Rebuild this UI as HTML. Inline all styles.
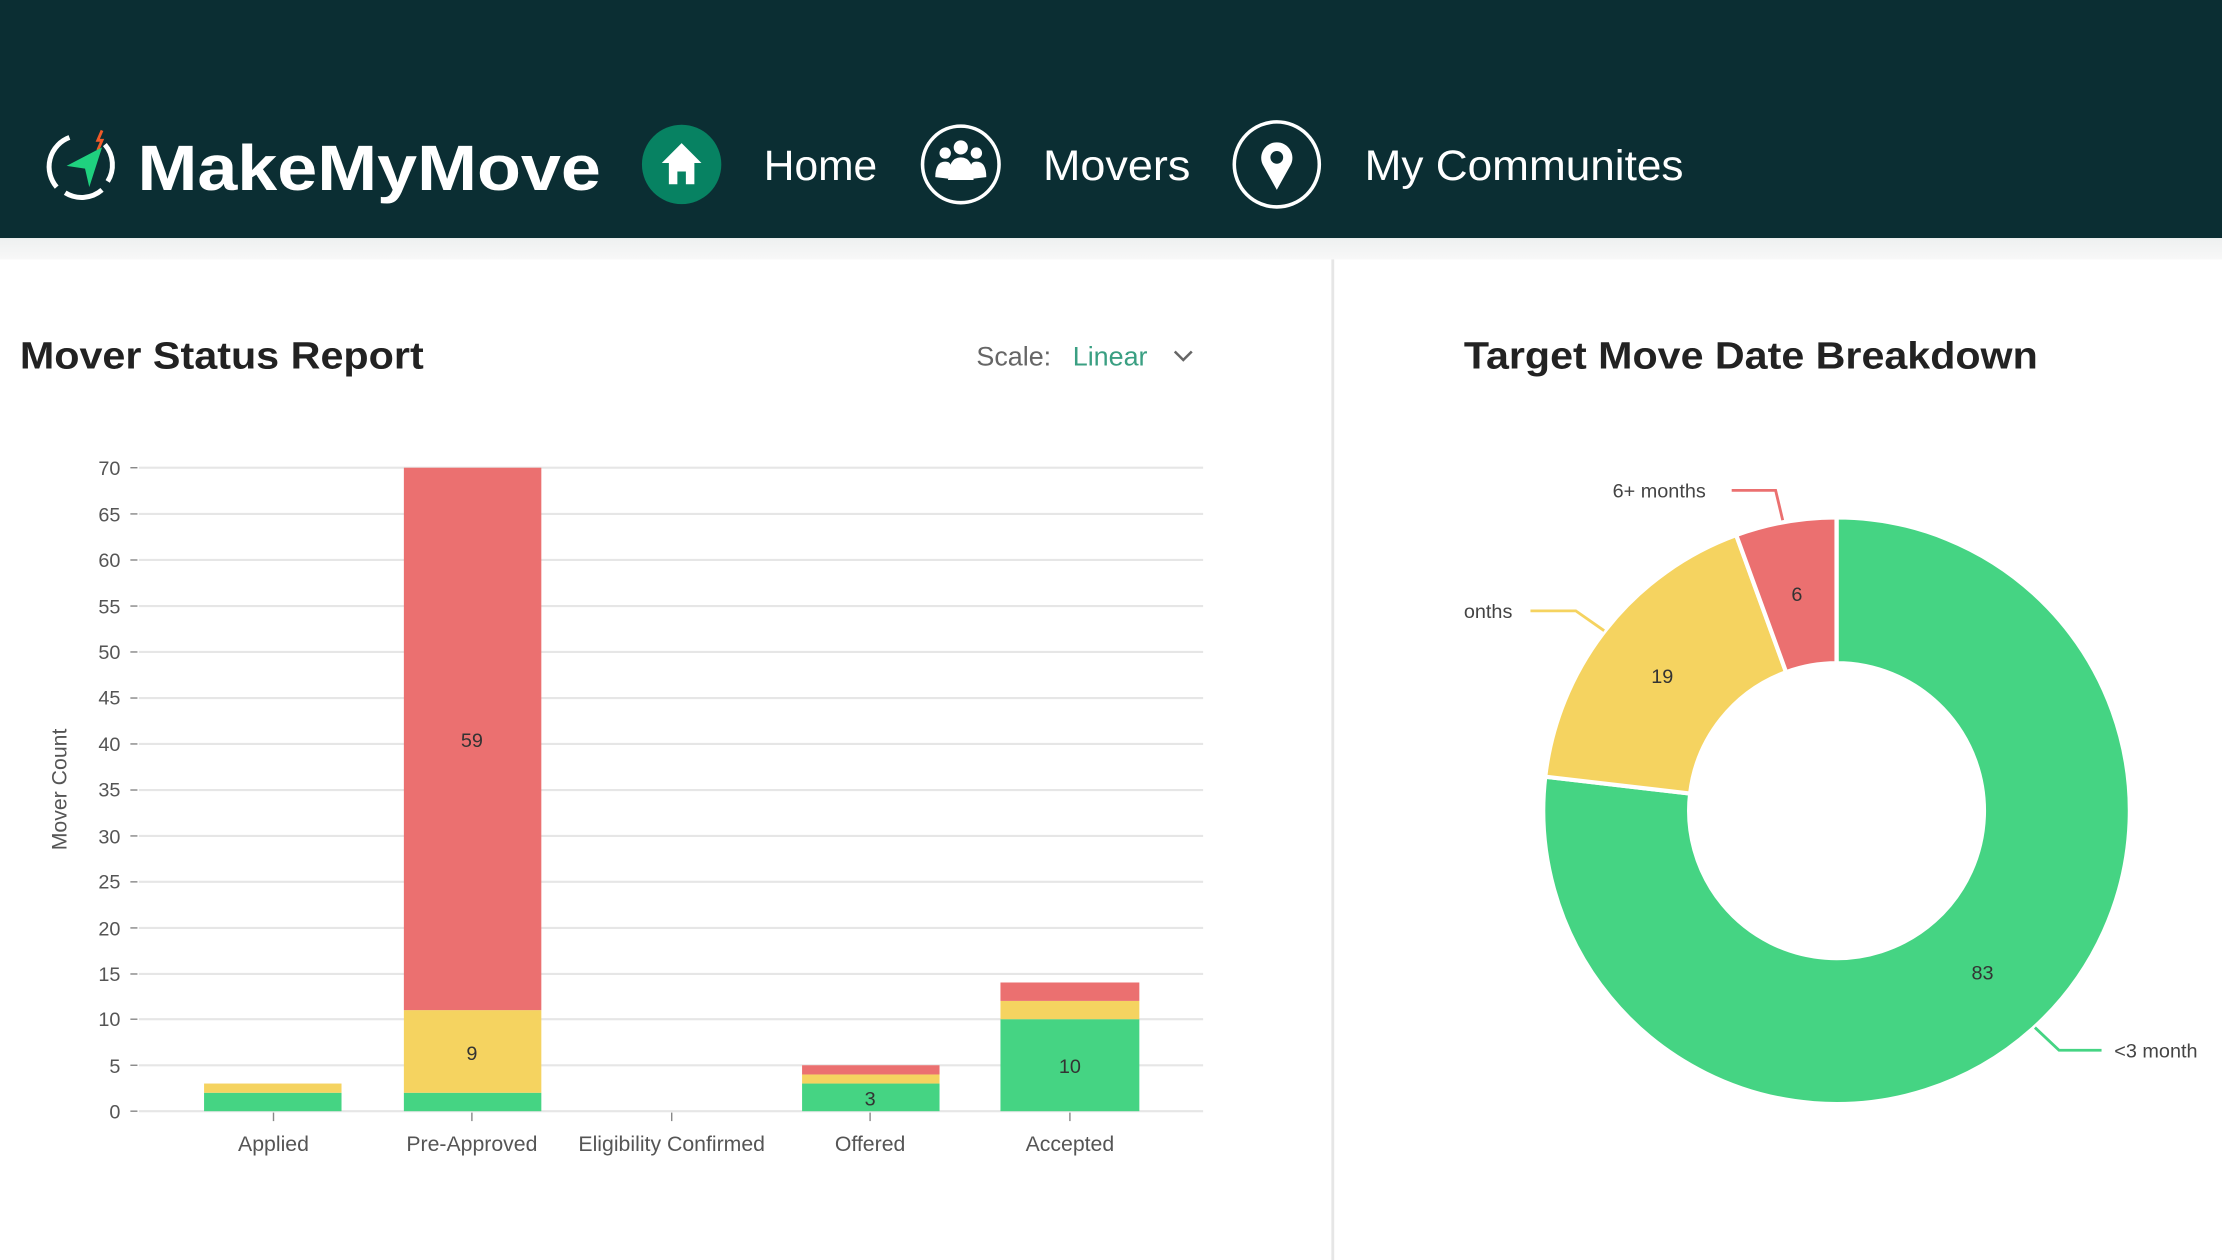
<!DOCTYPE html>
<html><head><meta charset="utf-8"><style>
html,body{margin:0;padding:0;background:#fff;width:2222px;height:1260px;overflow:hidden}
svg{display:block}
text{font-family:"Liberation Sans",sans-serif}
</style></head><body>
<svg width="2222" height="1260" viewBox="0 0 1568 889" preserveAspectRatio="none" xmlns="http://www.w3.org/2000/svg">
<defs><linearGradient id="sh" x1="0" y1="0" x2="0" y2="1"><stop offset="0" stop-color="#eef0f0"/><stop offset="1" stop-color="#f8f8f8"/></linearGradient></defs>
<rect x="0" y="0" width="1568" height="168" fill="#0b2e33"/>
<rect x="0" y="168" width="1568" height="15" fill="url(#sh)"/>
<line x1="940.5" y1="183" x2="940.5" y2="889" stroke="#e6e6e6" stroke-width="2"/>
<!-- logo -->
<g fill="none" stroke="#fff" stroke-width="3.5">
<path d="M49,97 A22,22 0 0 0 40,132"/>
<path d="M46,136 A22,22 0 0 0 72,134"/>
<path d="M76,128 A22,22 0 0 0 74,102"/>
</g>
<path d="M72,92 L69,99 L72,99 L69,106" stroke="#f05a28" stroke-width="2" fill="none"/>
<path d="M47,117 L72,104 L63,132 L60,119 Z" fill="#1fd17f"/>
<text x="97" y="134" font-size="45" font-weight="bold" fill="#fff" textLength="327" lengthAdjust="spacingAndGlyphs">MakeMyMove</text>
<!-- home -->
<circle cx="481" cy="116" r="28" fill="#078262"/>
<path d="M481,101 L467,115 L472,115 L472,130 L478,130 L478,121 L484,121 L484,130 L490,130 L490,115 L495,115 Z" fill="#fff"/>
<text x="539" y="127" font-size="30" fill="#fff">Home</text>
<circle cx="678" cy="116" r="27" fill="none" stroke="#fff" stroke-width="2.5"/>
<g fill="#fff">
<circle cx="678" cy="104" r="5"/><circle cx="667" cy="108" r="4"/><circle cx="689" cy="108" r="4"/>
<path d="M669,127 Q669,111 678,111 Q687,111 687,127 Z"/>
<path d="M660,125 Q660,114 667,114 Q671,114 671,118 L669,126 Z"/>
<path d="M696,125 Q696,114 689,114 Q685,114 685,118 L687,126 Z"/>
</g>
<text x="736" y="127" font-size="30" fill="#fff" textLength="104" lengthAdjust="spacingAndGlyphs">Movers</text>
<circle cx="901" cy="116" r="30" fill="none" stroke="#fff" stroke-width="2.5"/>
<path d="M901,134 L891,116 A11,11 0 1 1 911,116 Z" fill="#fff"/>
<circle cx="901" cy="111" r="4.5" fill="#0b2e33"/>
<text x="963" y="127" font-size="30" fill="#fff" textLength="225" lengthAdjust="spacingAndGlyphs">My Communites</text>
<!-- left panel -->
<text x="14" y="260" font-size="27" font-weight="bold" fill="#222" textLength="285" lengthAdjust="spacingAndGlyphs">Mover Status Report</text>
<text x="689" y="258" font-size="19" fill="#666">Scale:</text>
<text x="757" y="258" font-size="19" fill="#3a9f82">Linear</text>
<path d="M829,248 L835,254 L841,248" fill="none" stroke="#666" stroke-width="1.8"/>
<g stroke="#e6e6e6" stroke-width="1.5">
<line x1="98" y1="330" x2="849" y2="330"/><line x1="98" y1="362.6" x2="849" y2="362.6"/>
<line x1="98" y1="395.1" x2="849" y2="395.1"/><line x1="98" y1="427.6" x2="849" y2="427.6"/>
<line x1="98" y1="460" x2="849" y2="460"/><line x1="98" y1="492.5" x2="849" y2="492.5"/>
<line x1="98" y1="524.9" x2="849" y2="524.9"/><line x1="98" y1="557.4" x2="849" y2="557.4"/>
<line x1="98" y1="589.8" x2="849" y2="589.8"/><line x1="98" y1="622.2" x2="849" y2="622.2"/>
<line x1="98" y1="654.7" x2="849" y2="654.7"/><line x1="98" y1="687.2" x2="849" y2="687.2"/>
<line x1="98" y1="719.1" x2="849" y2="719.1"/><line x1="98" y1="751.6" x2="849" y2="751.6"/>
<line x1="98" y1="784" x2="849" y2="784"/>
</g>
<g stroke="#888" stroke-width="1">
<line x1="92" y1="330" x2="97" y2="330"/><line x1="92" y1="362.6" x2="97" y2="362.6"/><line x1="92" y1="395.1" x2="97" y2="395.1"/><line x1="92" y1="427.6" x2="97" y2="427.6"/><line x1="92" y1="460" x2="97" y2="460"/><line x1="92" y1="492.5" x2="97" y2="492.5"/><line x1="92" y1="524.9" x2="97" y2="524.9"/><line x1="92" y1="557.4" x2="97" y2="557.4"/><line x1="92" y1="589.8" x2="97" y2="589.8"/><line x1="92" y1="622.2" x2="97" y2="622.2"/><line x1="92" y1="654.7" x2="97" y2="654.7"/><line x1="92" y1="687.2" x2="97" y2="687.2"/><line x1="92" y1="719.1" x2="97" y2="719.1"/><line x1="92" y1="751.6" x2="97" y2="751.6"/><line x1="92" y1="784" x2="97" y2="784"/>
<line x1="193" y1="785" x2="193" y2="791"/><line x1="333" y1="785" x2="333" y2="791"/><line x1="474" y1="785" x2="474" y2="791"/><line x1="614" y1="785" x2="614" y2="791"/><line x1="755" y1="785" x2="755" y2="791"/>
</g>
<g font-size="14" fill="#555" text-anchor="end">
<text x="85" y="335">70</text><text x="85" y="368">65</text><text x="85" y="400">60</text><text x="85" y="433">55</text><text x="85" y="465">50</text><text x="85" y="497">45</text><text x="85" y="530">40</text><text x="85" y="562">35</text><text x="85" y="595">30</text><text x="85" y="627">25</text><text x="85" y="660">20</text><text x="85" y="692">15</text><text x="85" y="724">10</text><text x="85" y="757">5</text><text x="85" y="789">0</text>
</g>
<text transform="translate(47,557) rotate(-90)" font-size="15" fill="#555" text-anchor="middle">Mover Count</text>
<g font-size="15" fill="#555" text-anchor="middle">
<text x="193" y="812">Applied</text><text x="333" y="812">Pre-Approved</text><text x="474" y="812">Eligibility Confirmed</text><text x="614" y="812">Offered</text><text x="755" y="812">Accepted</text>
</g>
<g>
<rect x="144" y="771" width="97" height="13" fill="#45d483"/><rect x="144" y="764.5" width="97" height="6.5" fill="#f5d360"/>
<rect x="285" y="771" width="97" height="13" fill="#45d483"/><rect x="285" y="712.7" width="97" height="58.3" fill="#f5d360"/><rect x="285" y="330" width="97" height="382.7" fill="#eb7070"/>
<rect x="566" y="764.5" width="97" height="19.5" fill="#45d483"/><rect x="566" y="758.1" width="97" height="6.4" fill="#f5d360"/><rect x="566" y="751.6" width="97" height="6.5" fill="#eb7070"/>
<rect x="706" y="719.1" width="98" height="64.9" fill="#45d483"/><rect x="706" y="706.2" width="98" height="12.9" fill="#f5d360"/><rect x="706" y="693.2" width="98" height="13" fill="#eb7070"/>
</g>
<g font-size="14" fill="#333" text-anchor="middle">
<text x="333" y="527">59</text><text x="333" y="748">9</text><text x="614" y="780">3</text><text x="755" y="757">10</text>
</g>
<!-- right panel -->
<text x="1033" y="260" font-size="27" font-weight="bold" fill="#222" textLength="405" lengthAdjust="spacingAndGlyphs">Target Move Date Breakdown</text>
<g stroke="#fff" stroke-width="3" stroke-linejoin="round">
<path d="M1296,365 A207,207 0 1 1 1090.4,548 L1192.7,559.9 A104,104 0 1 0 1296,468 Z" fill="#45d483"/>
<path d="M1090.4,548 A207,207 0 0 1 1225.2,377.5 L1260.4,474.3 A104,104 0 0 0 1192.7,559.9 Z" fill="#f5d360"/>
<path d="M1225.2,377.5 A207,207 0 0 1 1296,365 L1296,468 A104,104 0 0 0 1260.4,474.3 Z" fill="#eb7070"/>
</g>
<g fill="none" stroke-width="2">
<path d="M1222,346 L1253,346 L1258,367" stroke="#eb7070"/>
<path d="M1080,431 L1112,431 L1132,445" stroke="#f5d360"/>
<path d="M1436,725 L1453,741 L1483,741" stroke="#45d483"/>
</g>
<g font-size="14" fill="#444">
<text x="1138" y="351">6+ months</text><text x="1033" y="436">onths</text><text x="1492" y="746">&lt;3 month</text>
</g>
<g font-size="14" fill="#333" text-anchor="middle">
<text x="1268" y="424">6</text><text x="1173" y="482">19</text><text x="1399" y="691">83</text>
</g>
</svg>
</body></html>
